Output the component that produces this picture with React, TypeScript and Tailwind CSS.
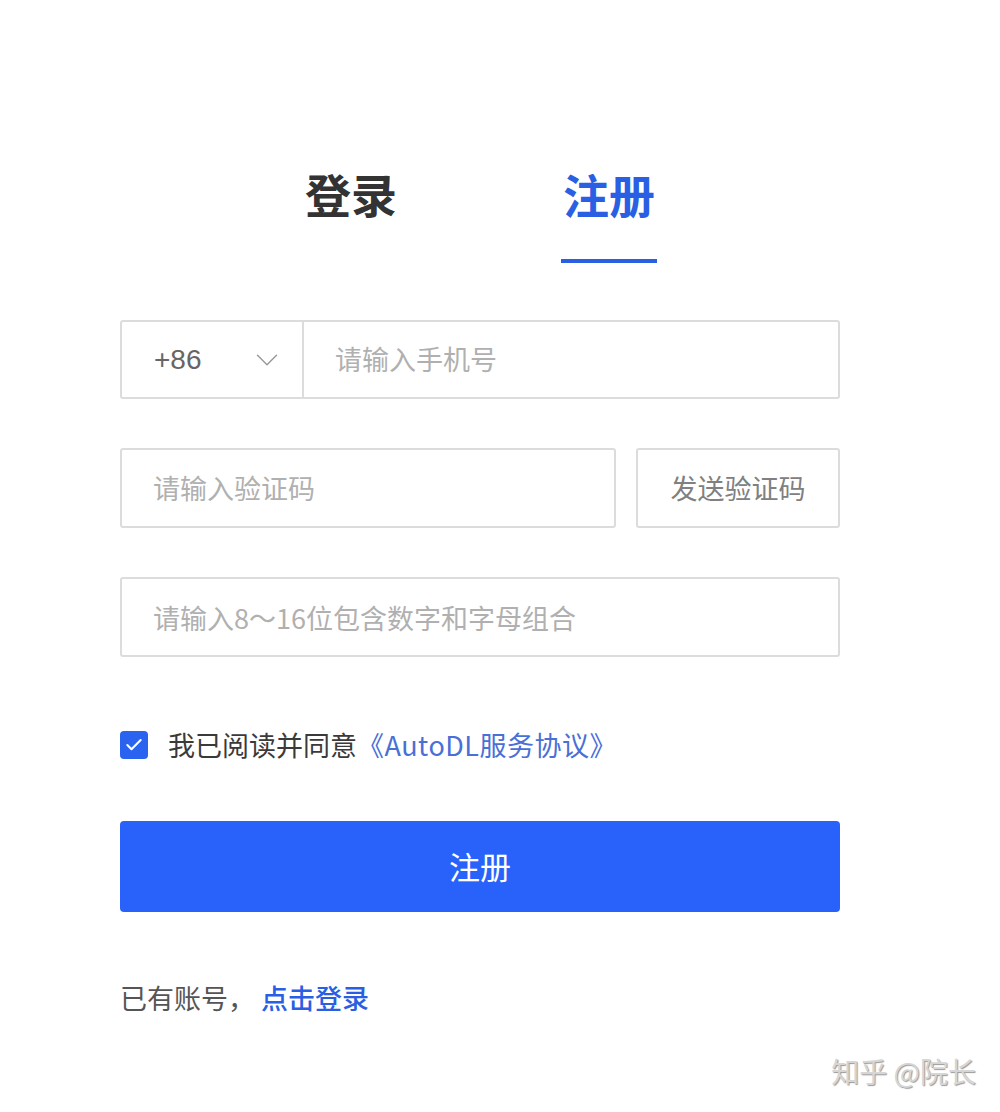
import { Check, ChevronDown } from "lucide-react";
import { useState } from "react";

const font = { fontFamily: '"Noto Sans CJK SC", "Noto Sans", sans-serif' };

export default function App() {
  const [tab, setTab] = useState<"login" | "register">("register");
  const [agreed, setAgreed] = useState(true);

  return (
    <div className="relative min-h-[1112px] w-[1000px] bg-white" style={font}>
      <div className="ml-[120px] w-[720px] pt-[160px]">
        <div className="flex justify-center gap-[162px]">
          <button
            className={`flex flex-col items-center text-[46px] font-bold leading-[66px] ${tab === "login" ? "text-[#2a5fe3]" : "text-[#333333]"}`}
            onClick={() => setTab("login")}
          >
            登录
            <span className={`mt-[33px] h-[4px] w-[96px] ${tab === "login" ? "bg-[#2a5fe3]" : "bg-transparent"}`} />
          </button>
          <button
            className={`flex flex-col items-center text-[46px] font-bold leading-[66px] ${tab === "register" ? "text-[#2a5fe3]" : "text-[#333333]"}`}
            onClick={() => setTab("register")}
          >
            注册
            <span className={`mt-[33px] h-[4px] w-[96px] ${tab === "register" ? "bg-[#2a5fe3]" : "bg-transparent"}`} />
          </button>
        </div>

        <div className="mt-[57px] flex h-[79px] rounded-[3px] border-2 border-[#dcdcdc]">
          <div className="flex w-[182px] items-center justify-between border-r-2 border-[#dcdcdc] pl-[32px] pr-[16px]">
            <span className="text-[28px] text-[#666666]" style={{ fontFamily: '"Liberation Sans", sans-serif' }}>+86</span>
            <ChevronDown size={38} strokeWidth={0.9} className="text-[#999999]" />
          </div>
          <input
            className="min-w-0 flex-1 px-[31px] text-[27px] text-[#333333] outline-none placeholder:text-[#b0b0b0]"
            placeholder="请输入手机号"
          />
        </div>

        <div className="mt-[49px] flex h-[80px] gap-[20px]">
          <input
            className="min-w-0 flex-1 rounded-[3px] border-2 border-[#dcdcdc] px-[31px] text-[27px] text-[#333333] outline-none placeholder:text-[#b0b0b0]"
            placeholder="请输入验证码"
          />
          <button className="w-[204px] rounded-[3px] border-2 border-[#dcdcdc] text-[27px] text-[#808080]">
            发送验证码
          </button>
        </div>

        <input
          className="mt-[49px] block h-[80px] w-full rounded-[3px] border-2 border-[#dcdcdc] px-[31px] text-[27px] text-[#333333] outline-none placeholder:text-[#b0b0b0]"
          placeholder="请输入8～16位包含数字和字母组合"
        />

        <label className="mt-[68px] flex items-center gap-[20px] text-[27px]">
          <span
            className={`flex h-[28px] w-[28px] items-center justify-center rounded-[4px] ${agreed ? "bg-[#2a63f0]" : "border-2 border-[#dcdcdc] bg-white"}`}
            onClick={() => setAgreed(!agreed)}
          >
            {agreed && <Check size={20} strokeWidth={2.5} className="text-white" />}
          </span>
          <span className="text-[#3a3a3a]">
            我已阅读并同意<span className="tracking-[0.5px] text-[#4a6fd6]">《AutoDL服务协议》</span>
          </span>
        </label>

        <button className="mt-[55px] flex h-[91px] w-full items-center justify-center rounded-[4px] bg-[#2962fb] text-[31px] text-white">
          注册
        </button>

        <p className="mt-[66px] text-[27px] text-[#555555]">
          已有账号，<span className="ml-[6px] font-medium text-[#2a5fe3]">点击登录</span>
        </p>
      </div>

      <div
        className="absolute right-[24px] top-[1050px] text-[28px] text-[#d6d6d6]"
        style={{ textShadow: "1px 1px 1px #9a9a9a" }}
      >
        知乎 @院长
      </div>
    </div>
  );
}
